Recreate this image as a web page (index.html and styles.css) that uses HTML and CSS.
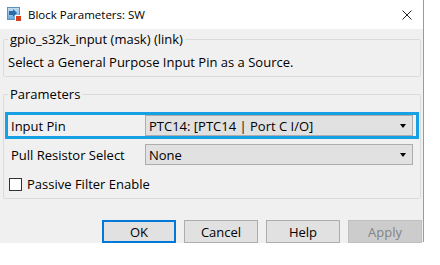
FILE: index.html
```html
<!DOCTYPE html>
<html>
<head>
<meta charset="utf-8">
<link rel="stylesheet" href="styles.css">
</head>
<body>
<div class="dialog">
  <div class="titlebar">
    <svg class="app-icon" width="15" height="15" viewBox="0 0 15 15">
      <defs>
        <linearGradient id="bg" x1="0" y1="0" x2="0" y2="1">
          <stop offset="0" stop-color="#c6e0f4"/>
          <stop offset="1" stop-color="#6aa9dc"/>
        </linearGradient>
      </defs>
      <rect x="0.5" y="0.5" width="12" height="12" fill="url(#bg)" stroke="#5a92c2"/>
      <path d="M2 4 H6 V2 L10 6 L6 10 V8 H2 Z" fill="#2a6aa8"/>
      <rect x="8.5" y="8.5" width="6" height="6" fill="#d8401c" stroke="#fff"/>
    </svg>
    <span class="title">Block Parameters: SW</span>
    <svg class="close" width="10" height="10" viewBox="0 0 10 10">
      <path d="M0.5 0.5 L9.5 9.5 M9.5 0.5 L0.5 9.5" stroke="#222" stroke-width="1" fill="none"/>
    </svg>
  </div>
  <div class="content">
    <fieldset class="group mask">
      <legend>gpio_s32k_input (mask) (link)</legend>
      <div class="desc">Select a General Purpose Input Pin as a Source.</div>
    </fieldset>
    <fieldset class="group params">
      <legend>Parameters</legend>
      <div class="row focused">
        <span class="label">Input Pin</span>
        <div class="combo"><span class="value">PTC14: [PTC14 | Port C I/O]</span><span class="arrow"></span></div>
      </div>
      <div class="row">
        <span class="label">Pull Resistor Select</span>
        <div class="combo"><span class="value">None</span><span class="arrow"></span></div>
      </div>
      <div class="check"><span class="box"></span><span>Passive Filter Enable</span></div>
    </fieldset>
    <div class="buttons">
      <div class="btn default">OK</div>
      <div class="btn">Cancel</div>
      <div class="btn">Help</div>
      <div class="btn disabled">Apply</div>
    </div>
  </div>
</div>
</body>
</html>
```
FILE: styles.css
```css
html, body {
  margin: 0;
  padding: 0;
  background: #ffffff;
}
body {
  width: 440px;
  height: 265px;
  font-family: "Open Sans", "Noto Sans", sans-serif;
  font-size: 13px;
  color: #000;
}
.dialog {
  width: 423px;
  height: 242px;
  border-right: 1px solid #9a9a9a;
  display: flex;
  flex-direction: column;
}
.titlebar {
  height: 29px;
  flex: none;
  background: #fff;
  display: flex;
  align-items: center;
  padding: 0 11px 0 7px;
}
.app-icon {
  margin-right: 6px;
  flex: none;
}
.title {
  font-size: 11.5px;
  color: #000;
}
.close {
  margin-left: auto;
}
.content {
  flex: 1;
  background: #f0f0f0;
  padding: 2px 2px 0 3px;
  display: flex;
  flex-direction: column;
}
.group {
  margin: 0;
  border: 1px solid #dadada;
  border-radius: 2px;
  min-width: 0;
}
.group legend {
  padding: 0 2px;
  line-height: 16px;
}
.mask {
  padding: 7px 4px 6px 4px;
}
.mask legend {
  margin-left: 0;
}
.desc {
  line-height: 16px;
}
.params {
  margin-top: 9px;
  padding: 10px 1px 6px 1px;
}
.params legend {
  margin-left: 3px;
}
.row {
  display: flex;
  align-items: center;
  height: 21px;
  border: 3px solid transparent;
}
.row + .row {
  margin-top: 2px;
}
.row.focused {
  border-color: #18a0e4;
}
.label {
  width: 134px;
  padding-left: 3px;
  flex: none;
}
.combo {
  flex: 1;
  margin-right: 3px;
  height: 19px;
  background: #e1e1e1;
  border: 1px solid #adadad;
  display: flex;
  align-items: center;
  padding: 0 6px 0 3px;
}
.value {
  flex: 1;
}
.arrow {
  width: 0;
  height: 0;
  border-left: 3.5px solid transparent;
  border-right: 3.5px solid transparent;
  border-top: 4px solid #000;
}
.check {
  display: flex;
  align-items: center;
  line-height: 16px;
  margin-top: 8px;
  padding-left: 4px;
}
.box {
  width: 11px;
  height: 11px;
  border: 1px solid #333;
  background: #fff;
  margin-right: 5px;
}
.buttons {
  display: flex;
  justify-content: flex-end;
  gap: 8px;
  margin-top: 21px;
  margin-right: -1px;
}
.btn {
  width: 72px;
  height: 21px;
  border: 1px solid #adadad;
  background: #e1e1e1;
  display: flex;
  align-items: center;
  justify-content: center;
}
.btn.default {
  width: 70px;
  height: 19px;
  border: 2px solid #0078d7;
}
.btn.disabled {
  background: #cccccc;
  border-color: #bfbfbf;
  color: #838383;
}
```
